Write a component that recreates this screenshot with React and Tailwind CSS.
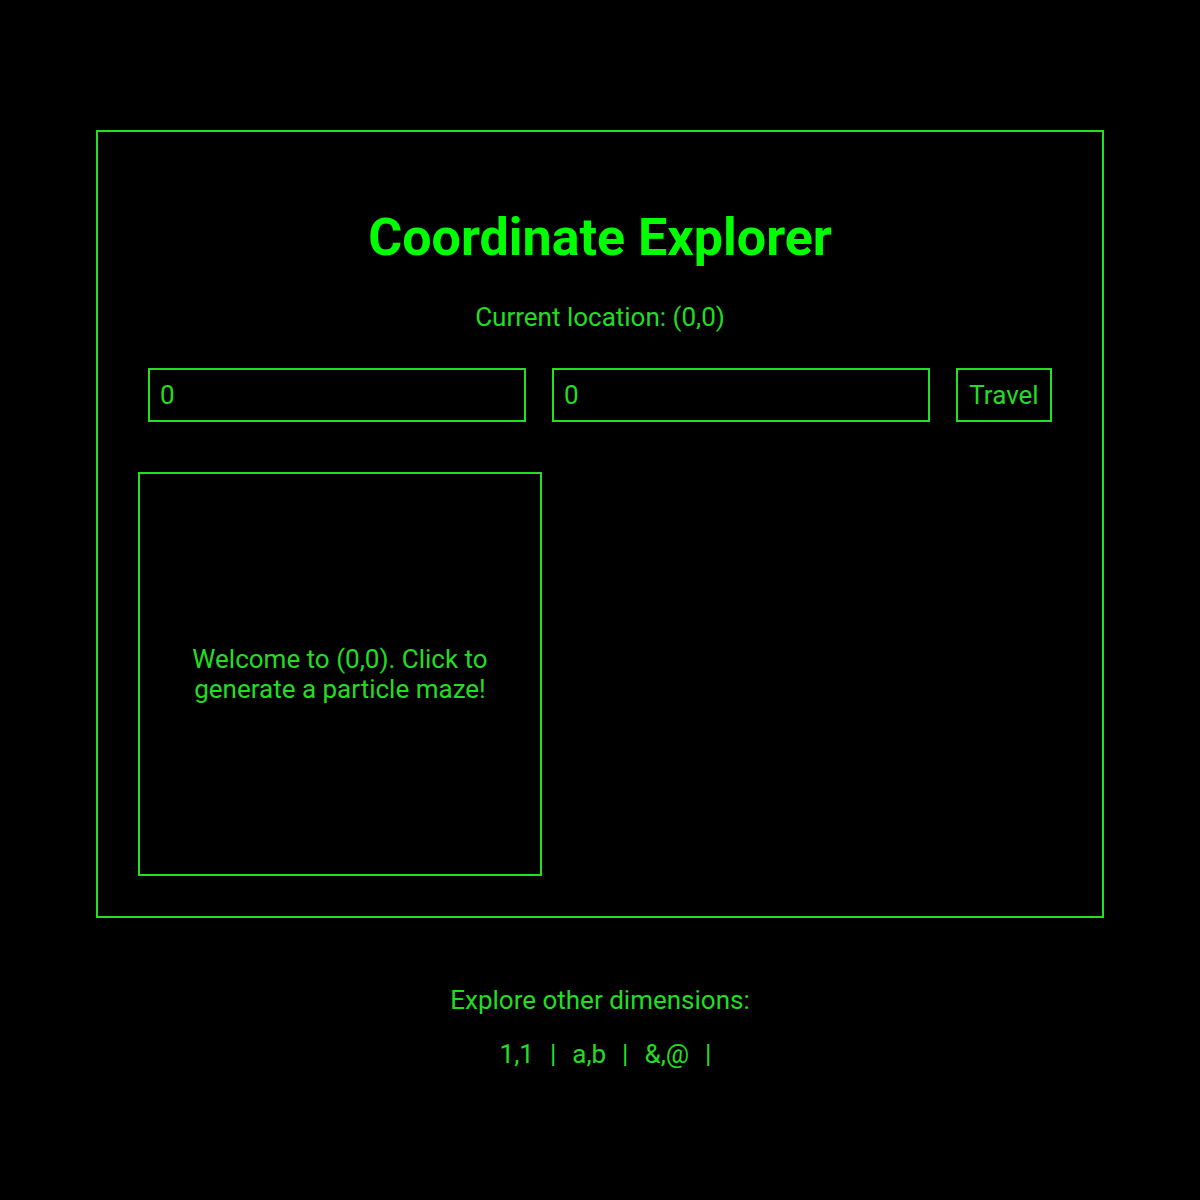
export default function App() {
  const links = ["1,1", "a,b", "&,@"];
  return (
    <div
      className="min-h-[1200px] bg-black text-[#22dd22] text-[26px] pt-[130px]"
      style={{ fontFamily: "Roboto, 'Liberation Sans', sans-serif" }}
    >
      <div className="mx-auto w-[1008px] border-2 border-[#22e022] p-[40px]">
        <h1 className="text-center text-[52px] font-bold leading-none text-[#00ff00] mt-[40px]">
          Coordinate Explorer
        </h1>
        <p className="text-center leading-none mt-[40px]">Current location: (0,0)</p>
        <div className="flex items-center px-[10px] mt-[38px] gap-[26px]">
          <input
            defaultValue="0"
            className="w-[378px] h-[54px] border-2 border-[#22e022] bg-black px-[10px] text-[26px] text-[#22dd22] outline-none"
          />
          <input
            defaultValue="0"
            className="w-[378px] h-[54px] border-2 border-[#22e022] bg-black px-[10px] text-[26px] text-[#22dd22] outline-none"
          />
          <button className="w-[96px] h-[54px] border-2 border-[#22e022] bg-black text-[26px] text-[#22dd22]">
            Travel
          </button>
        </div>
        <div className="mt-[50px] w-[404px] h-[404px] border-2 border-[#22e022] flex items-center justify-center px-[30px] text-center leading-[30px]">
          Welcome to (0,0). Click to generate a particle maze!
        </div>
      </div>
      <div className="text-center mt-[69px] leading-none">Explore other dimensions:</div>
      <div className="flex justify-center items-center gap-[16px] mt-[28px] leading-none pl-[11px]">
        {links.map((l) => (
          <div key={l} className="flex items-center gap-[16px]">
            <span>{l}</span>
            <span>|</span>
          </div>
        ))}
      </div>
    </div>
  );
}
